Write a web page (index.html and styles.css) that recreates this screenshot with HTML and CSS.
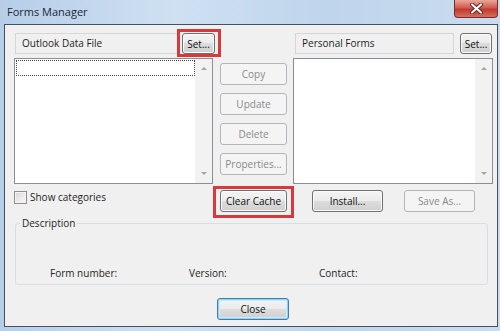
FILE: index.html
```html
<!DOCTYPE html>
<html lang="en">
  <head>
    <meta charset="UTF-8" />
    <title>Forms Manager</title>
    <link rel="stylesheet" href="styles.css">
  </head>
  <body>
    <div class="window">
      <div class="titlebar">
        <span class="title">Forms Manager</span>
        <span class="close-btn">
          <svg width="13" height="11" viewBox="0 0 13 11">
            <path d="M2 1.5 L11 9.5 M11 1.5 L2 9.5" stroke="#5a2220" stroke-width="4" stroke-linecap="round" fill="none"/>
            <path d="M2 1.5 L11 9.5 M11 1.5 L2 9.5" stroke="#fff" stroke-width="2.2" stroke-linecap="round" fill="none"/>
          </svg>
        </span>
      </div>

      <div class="client">
        <div class="panels">
          <div class="panel panel-left">
            <div class="panel-head">
              <div class="field">Outlook Data File</div>
              <span class="mark mark-set"><button class="btn set">Set...</button></span>
            </div>
            <div class="listbox">
              <div class="list-area"><div class="focus-row"></div></div>
              <div class="scrollbar">
                <span class="arrow up"></span>
                <span class="arrow down"></span>
              </div>
            </div>
          </div>

          <div class="actions">
            <button class="btn" disabled>Copy</button>
            <button class="btn" disabled>Update</button>
            <button class="btn" disabled>Delete</button>
            <button class="btn" disabled>Properties...</button>
          </div>

          <div class="panel panel-right">
            <div class="panel-head">
              <div class="field">Personal Forms</div>
              <button class="btn set">Set...</button>
            </div>
            <div class="listbox">
              <div class="list-area"></div>
              <div class="scrollbar">
                <span class="arrow up"></span>
                <span class="arrow down"></span>
              </div>
            </div>
          </div>
        </div>

        <div class="toolbar">
          <label class="check"><span class="box"></span>Show categories</label>
          <span class="mark mark-cache"><button class="btn cache">Clear Cache</button></span>
          <button class="btn install">Install...</button>
          <button class="btn save" disabled>Save As...</button>
        </div>

        <fieldset class="description">
          <legend>Description</legend>
          <div class="meta">
            <span class="meta-form">Form number:</span>
            <span class="meta-version">Version:</span>
            <span>Contact:</span>
          </div>
        </fieldset>

        <div class="footer">
          <button class="btn default">Close</button>
        </div>
      </div>
    </div>
  </body>
</html>
```

FILE: styles.css
```css
* {
  box-sizing: border-box;
}
body {
  margin: 0;
  font-family: "Open Sans", "Noto Sans", sans-serif;
  font-size: 10px;
  color: #1e1e1e;
  background-color: #bcd3ea;
}
.window {
  width: 500px;
  height: 331px;
  display: flex;
  flex-direction: column;
  background: linear-gradient(90deg, #b6cee8, #cfe0f2 35%, #bfd5ec 65%, #cadcef);
}
.titlebar {
  height: 24px;
  display: flex;
  justify-content: space-between;
  align-items: flex-start;
  padding-left: 7px;
}
.title {
  font-size: 11px;
  line-height: 23px;
  color: #1c2733;
}
.close-btn {
  width: 44px;
  height: 18px;
  margin-right: 2px;
  border: 1px solid #7c2c27;
  border-top: none;
  border-radius: 0 0 4px 4px;
  background: linear-gradient(#eaa89a, #d45a4e 45%, #c13a30 55%, #d56f5c);
  display: flex;
  align-items: center;
  justify-content: center;
}
.client {
  margin-left: 4px;
  width: 494px;
  height: 303px;
  border: 1px solid #45525e;
  background-color: #f0f0f0;
  padding: 8px 4px 0 9px;
}

/* top panels */
.panels {
  display: flex;
  align-items: flex-start;
}
.panel-left {
  width: 199px;
}
.panel-right {
  width: 200px;
  margin-left: 6px;
}
.panel-head {
  display: flex;
  height: 21px;
}
.field {
  height: 21px;
  border: 1px solid #d6d6d6;
  padding-left: 6px;
  line-height: 19px;
  flex-shrink: 0;
}
.panel-left .field {
  width: 163px;
  margin-left: 1px;
}
.panel-right .field {
  width: 159px;
  margin-left: 2px;
}
.panel-left .mark-set {
  margin-left: 4px;
}
.panel-right .set {
  margin-left: 6px;
  width: 32px;
}
.set {
  width: 33px;
  height: 21px;
}
.listbox {
  margin-top: 4px;
  height: 126px;
  border: 1px solid #8b8f95;
  background-color: #fff;
  display: flex;
}
.list-area {
  flex: 1;
}
.focus-row {
  margin: 1px 0 0 1px;
  height: 16px;
  border: 1px dotted #444;
}
.scrollbar {
  width: 17px;
  background-color: #f2f2f2;
  display: flex;
  flex-direction: column;
  justify-content: space-between;
  align-items: center;
  padding: 8px 0 8px;
}
.arrow {
  width: 0;
  height: 0;
  border-left: 3px solid transparent;
  border-right: 3px solid transparent;
}
.arrow.up {
  border-bottom: 3px solid #a4a4a4;
}
.arrow.down {
  border-top: 3px solid #a4a4a4;
}

/* middle buttons */
.actions {
  width: 67px;
  margin-left: 7px;
  padding-top: 30px;
  display: flex;
  flex-direction: column;
  gap: 8px;
}
.actions .btn {
  height: 22px;
}

/* buttons */
.btn {
  font-family: inherit;
  font-size: 10px;
  color: #111;
  padding: 0;
  border: 1px solid #707070;
  border-radius: 3px;
  background: linear-gradient(#f3f3f3, #ebebeb 50%, #dddddd 50%, #cfcfcf);
  box-shadow: inset 0 0 0 1px #fbfbfb;
}
.btn:disabled {
  color: #8a8a8a;
  border-color: #b3b6b8;
  background: #f4f4f4;
  box-shadow: none;
}
.btn.default {
  border-color: #3d7eb0;
  box-shadow: inset 0 0 0 1px #94d3f3, inset 0 0 0 2px #c9ebfb;
}

/* red annotation boxes */
.mark {
  position: relative;
  display: inline-flex;
}
.mark::after {
  content: "";
  position: absolute;
  border: 3px solid #d63a3c;
  pointer-events: none;
}
.mark-set::after {
  top: -4px;
  bottom: -3px;
  left: -5px;
  right: -6px;
}
.mark-cache::after {
  top: -4px;
  bottom: -6px;
  left: -7px;
  right: -7px;
}

/* bottom row */
.toolbar {
  margin-top: 6px;
  height: 22px;
  display: flex;
  align-items: flex-start;
}
.check {
  width: 206px;
  margin-top: 1px;
  display: flex;
  align-items: center;
  line-height: 13px;
}
.box {
  width: 13px;
  height: 13px;
  margin-right: 3px;
  border: 1px solid #8e8f8f;
  background: linear-gradient(135deg, #d9d9d9, #fbfbfb);
  box-shadow: inset 0 0 0 1px #f4f4f4;
}
.cache {
  width: 67px;
  height: 22px;
}
.install {
  width: 71px;
  height: 22px;
  margin-left: 25px;
}
.save {
  width: 71px;
  height: 22px;
  margin-left: 21px;
}

/* description group */
.description {
  margin: 4px 0 0 1px;
  padding: 0;
  width: 473px;
  height: 69px;
  border: 1px solid #d5dfe5;
  border-radius: 3px;
}
.description legend {
  margin-left: 4px;
  padding: 0 2px;
  line-height: 14px;
}
.meta {
  margin-top: 36px;
  padding-left: 34px;
  display: flex;
  line-height: 14px;
}
.meta-form {
  width: 139px;
}
.meta-version {
  width: 130px;
}

/* footer */
.footer {
  margin-top: 13px;
  padding-left: 203px;
}
.footer .btn {
  width: 72px;
  height: 22px;
}
```
